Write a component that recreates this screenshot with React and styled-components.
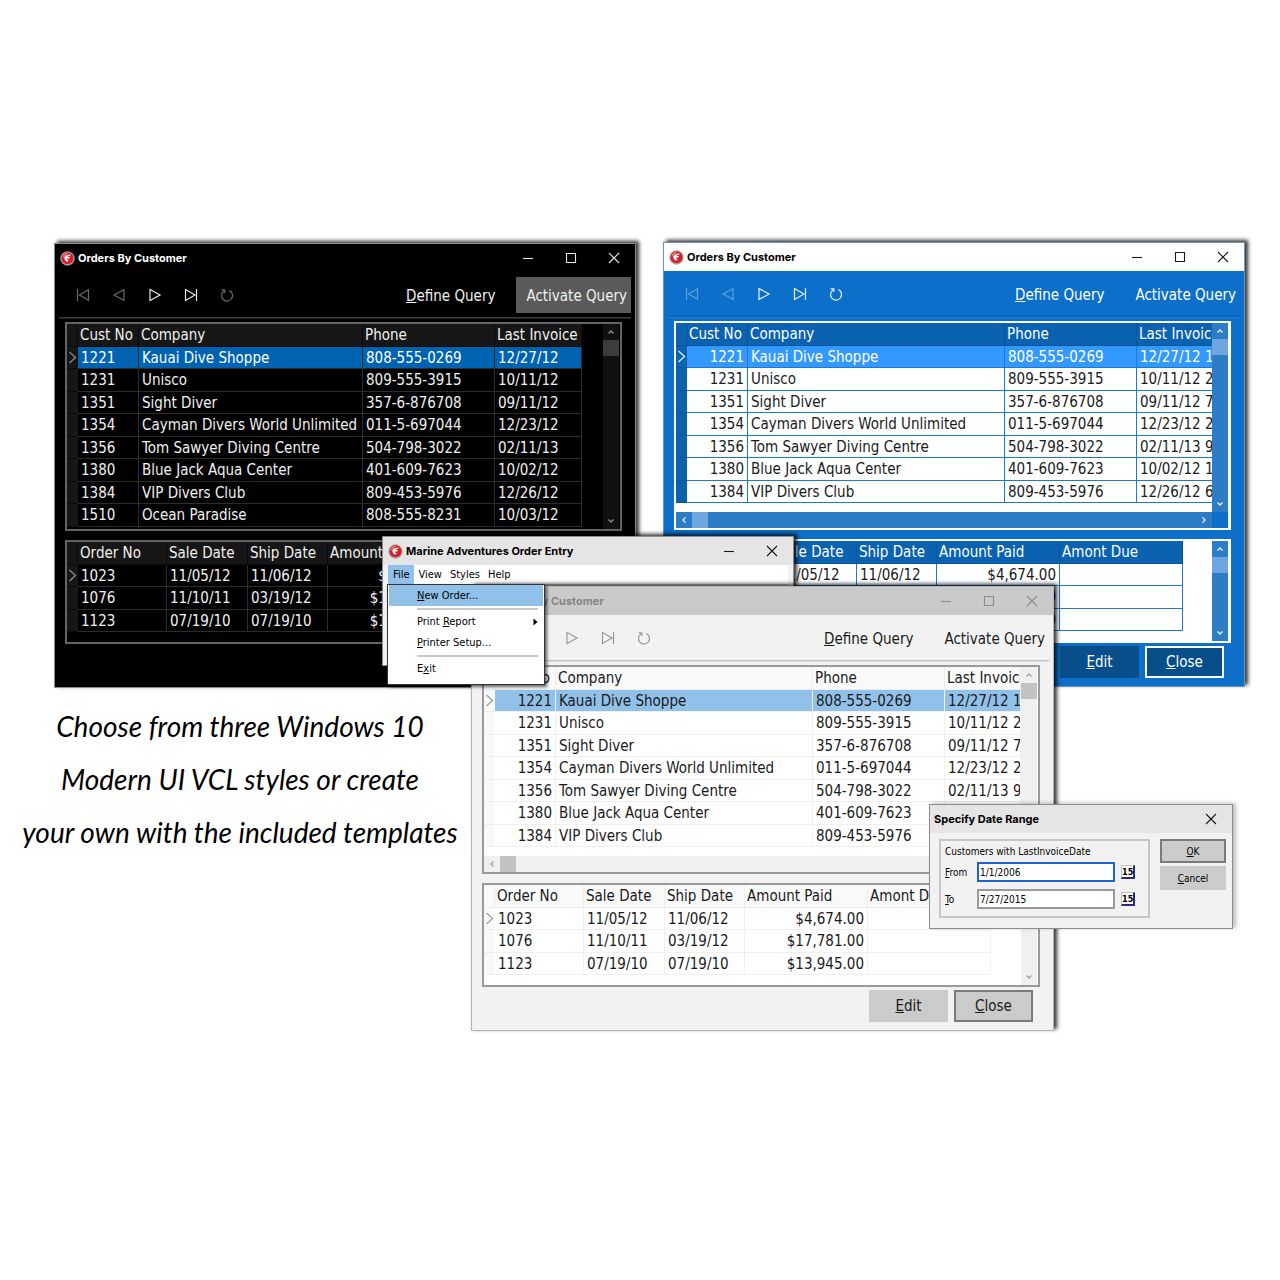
import React from 'react';
import styled, { createGlobalStyle, ThemeProvider } from 'styled-components';


const GlobalStyle = createGlobalStyle`
  * {
    box-sizing: border-box;
  }

  body {
    margin: 0;
    background-color: #fff;
    font-family: Tahoma, 'DejaVu Sans Condensed', sans-serif;
    font-size: 15px;
  }

  button, input {
    font-family: inherit;
    font-size: inherit;
    color: inherit;
    border-radius: 0;
    margin: 0;
  }
`;

// One theme for each of the three VCL styles
const darkTheme = {
  frame: '#8c8c8c',
  titleBg: '#000',
  titleText: '#fff',
  sysIcon: '#e6e6e6',
  bg: '#000',
  text: '#f0f0f0',
  icon: '#e6e6e6',
  iconOff: '#6a6a6a',
  rule: '#3c3c3c',
  ruleLight: '#222',
  gridBorder: '#646464',
  gridBg: '#000',
  gridText: '#f0f0f0',
  headBg: '#161616',
  headText: '#f0f0f0',
  headLine: '#0a0a0a',
  cellLine: '#2c2c2c',
  selBg: '#0063b1',
  selText: '#fff',
  track: '#111',
  thumb: '#3c3c3c',
  corner: '#000',
  arrow: '#8c8c8c',
  btnBg: '#333',
  btnBorder: '#777',
  toolActive: '#5a5a5a',
};

const blueTheme = {
  frame: '#6f93b8',
  titleBg: '#fff',
  titleText: '#000',
  sysIcon: '#1a1a1a',
  bg: '#0c6fc9',
  text: '#fff',
  icon: '#e4f0fb',
  iconOff: '#5b9fdc',
  rule: '#0a5cab',
  ruleLight: '#1a80dc',
  gridBorder: '#fff',
  gridBg: '#fff',
  gridText: '#1a1a1a',
  headBg: '#0a62b0',
  headText: '#fff',
  headLine: '#08559b',
  cellLine: '#1d7ad0',
  selBg: '#3399ff',
  selText: '#fff',
  track: '#2d7dc6',
  thumb: '#6ea7e0',
  corner: '#0c6fc9',
  arrow: '#e4f0fb',
  btnBg: '#084e8a',
  btnBorder: '#fff',
};

const lightTheme = {
  frame: '#b4b4b4',
  titleBg: '#cacaca',
  titleText: '#858585',
  sysIcon: '#8c8c8c',
  bg: '#f2f2f2',
  text: '#1a1a1a',
  icon: '#9a9a9a',
  iconOff: '#c4c4c4',
  rule: '#c2c2c2',
  ruleLight: '#dcdcdc',
  gridBorder: '#999',
  gridBg: '#fff',
  gridText: '#1a1a1a',
  headBg: '#f9f9f9',
  headText: '#1a1a1a',
  headLine: '#ededed',
  cellLine: '#f0f0f0',
  selBg: '#91c1e9',
  selText: '#1a1a1a',
  track: '#f0f0f0',
  thumb: '#c2c2c2',
  corner: '#f0f0f0',
  arrow: '#a0a0a0',
  btnBg: '#cbcbcb',
  btnBorder: '#7a7a7a',
};

const Desktop = styled.main`
  position: relative;
  min-height: 100vh;
  overflow: hidden;
`;

// Windows float freely on the desktop, so they carry their own position
const Window = styled.section`
  position: absolute;
  left: ${props => props.$x}px;
  top: ${props => props.$y}px;
  width: ${props => props.$width}px;
  display: flex;
  flex-direction: column;
  background-color: ${props => props.theme.bg};
  color: ${props => props.theme.text};
  border: 1px solid ${props => props.theme.frame};
  box-shadow: 3px -2px 4px rgba(0, 0, 0, 0.8);
`;

const SmallWindow = styled.section`
  position: absolute;
  left: ${props => props.$x}px;
  top: ${props => props.$y}px;
  width: ${props => props.$width}px;
  background-color: #f2f2f2;
  color: #000;
  font-size: 10px;
  border: 1px solid #8c8c8c;
  box-shadow: ${props => props.$soft ? '3px -1px 4px rgba(0, 0, 0, 0.25)' : '3px -2px 4px rgba(0, 0, 0, 0.8)'};
`;

const TitleBar = styled.header`
  display: flex;
  align-items: center;
  height: 28px;
  padding-left: ${props => props.$plain ? 4 : 5}px;
  background-color: ${props => props.$dialog ? '#e5e5e5' : props.theme.titleBg};
  color: ${props => props.$dialog ? '#000' : props.theme.titleText};
`;

const Title = styled.h2`
  flex: 1;
  margin: 0;
  font-family: Inter, sans-serif;
  font-size: 11px;
  font-weight: 700;

  svg + & {
    margin-left: 3px;
  }
`;

const SysButton = styled.button`
  display: flex;
  align-items: center;
  justify-content: center;
  width: 43px;
  height: 28px;
  padding: 0;
  border: none;
  background: none;
  color: ${props => props.$dialog ? '#1a1a1a' : props.theme.sysIcon};
`;

const Toolbar = styled.div`
  display: flex;
  align-items: center;
  margin: 0 4px;
  padding: 5px 0 4px 6px;
  border-bottom: 1px solid ${props => props.theme.rule};
  box-shadow: 0 1px 0 ${props => props.theme.ruleLight};
`;

const NavButton = styled.button`
  display: flex;
  align-items: center;
  justify-content: center;
  width: 36px;
  height: 36px;
  padding: 0;
  border: none;
  background: none;
  color: ${props => props.disabled ? props.theme.iconOff : props.theme.icon};
`;

const ToolButton = styled.button`
  height: 36px;
  padding: 2px 4px 0 10px;
  border: none;
  background-color: ${props => props.$active ? props.theme.toolActive : 'transparent'};

  &:first-of-type {
    margin-right: 17px;
  }
`;

const ToolActions = styled.div`
  display: flex;
  margin-left: auto;
`;

const Content = styled.div`
  display: flex;
  flex-direction: column;
  gap: 9px;
  padding: 4px 13px 0 10px;
`;

const GridFrame = styled.div`
  display: grid;
  grid-template-columns: minmax(0, 1fr) 16px;
  grid-template-rows: minmax(0, 1fr) auto;
  height: ${props => props.$height}px;
  padding-right: 1px;
  border: 2px solid ${props => props.theme.gridBorder};
  background-color: ${props => props.theme.gridBg};
`;

const GridView = styled.div`
  overflow: hidden;
`;

const Table = styled.table`
  width: ${props => props.$width};
  table-layout: fixed;
  border-collapse: separate;
  border-spacing: 0;
  color: ${props => props.theme.gridText};
`;

const Col = styled.col`
  width: ${props => props.$width}px;
`;

const Row = styled.tr`
  height: 23px;
  background-color: ${props => props.$selected ? props.theme.selBg : 'transparent'};
  color: ${props => props.$selected ? props.theme.selText : 'inherit'};

  tbody &:nth-child(odd) {
    height: 22px;
  }
`;

const HeadCell = styled.th`
  padding: 0 0 0 2px;
  overflow: hidden;
  white-space: nowrap;
  text-align: left;
  font-weight: 400;
  line-height: 18px;
  background-color: ${props => props.theme.headBg};
  color: ${props => props.theme.headText};
  border-right: 1px solid ${props => props.theme.headLine};
  border-bottom: 1px solid ${props => props.theme.headLine};
`;

const MarkCell = styled.td`
  padding: 0;
  line-height: 0;
  background-color: ${props => props.theme.headBg};
  color: ${props => props.theme.arrow};
  border-bottom: 1px solid ${props => props.theme.headLine};
`;

const Cell = styled.td`
  padding: 0 3px;
  overflow: hidden;
  white-space: nowrap;
  line-height: 18px;
  text-align: ${props => props.$right ? 'right' : 'left'};
  border-right: 1px solid ${props => props.theme.cellLine};
  border-bottom: 1px solid ${props => props.theme.cellLine};
`;

const ScrollBar = styled.div`
  display: flex;
  flex-direction: ${props => props.$horizontal ? 'row' : 'column'};
  background-color: ${props => props.theme.track};
`;

const ScrollArrow = styled.button`
  display: flex;
  align-items: center;
  justify-content: center;
  width: 16px;
  height: 16px;
  padding: 0;
  border: none;
  background: none;
  color: ${props => props.theme.arrow};
  transform: rotate(${props => props.$turn}deg);

  &:last-child {
    margin-${props => props.$horizontal ? 'left' : 'top'}: auto;
  }
`;

const ScrollThumb = styled.div`
  width: 16px;
  height: 16px;
  background-color: ${props => props.theme.thumb};
`;

const Corner = styled.div`
  background-color: ${props => props.theme.corner};
`;

const Footer = styled.footer`
  display: flex;
  justify-content: flex-end;
  gap: 6px;
  min-height: 43px;
  padding: 3px 20px 8px;
`;

const FooterButton = styled.button`
  width: 79px;
  height: 32px;
  padding: 0;
  background-color: ${props => props.theme.btnBg};
  border: 2px solid ${props => props.$isDefault ? props.theme.btnBorder : props.theme.btnBg};
`;

const MenuBar = styled.nav`
  display: flex;
  height: 20px;
  margin: 0 5px;
  background-color: #fff;
  border-bottom: 1px solid #c8c8c8;
`;

const MenuBarItem = styled.button`
  padding: 0 ${props => props.$open ? 5 : 4}px;
  border: none;
  font-size: 11px;
  background-color: ${props => props.$open ? '#91c1e9' : 'transparent'};
`;

const MainArea = styled.div`
  height: 80px;
  margin: 0 5px;
  background-color: #fff;
`;

const Menu = styled.ul`
  position: absolute;
  z-index: 5;
  left: 4px;
  top: 47px;
  width: 158px;
  margin: 0;
  padding: 0 1px 5px;
  list-style: none;
  background-color: #fff;
  border: 1px solid #333;
  box-shadow: 2px 2px 3px rgba(0, 0, 0, 0.6);
`;

const MenuItem = styled.button`
  display: flex;
  align-items: center;
  justify-content: space-between;
  width: 100%;
  height: 21px;
  padding: 0 5px 0 28px;
  border: none;
  font-size: 11px;
  background-color: ${props => props.$selected ? '#91c1e9' : 'transparent'};
`;

const MenuRule = styled.li`
  height: 2px;
  margin: 2px 5px 1px 28px;
  background-color: #c8c8c8;
`;

const DialogBody = styled.form`
  display: flex;
  align-items: flex-start;
  gap: 10px;
  padding: 6px 6px 10px 9px;
`;

const GroupBox = styled.fieldset`
  flex: 1;
  min-width: 0;
  margin: 0;
  padding: 3px 11px 7px 4px;
  border: 2px solid #c6c6c6;
`;

const GroupTitle = styled.div`
  height: 18px;
  line-height: 16px;
`;

const Field = styled.div`
  display: grid;
  grid-template-columns: 26px 1fr 16px;
  column-gap: 6px;
  align-items: center;

  & + & {
    margin-top: 7px;
  }
`;

const DateInput = styled.input`
  width: 100%;
  height: 20px;
  padding: 0 1px;
  background-color: #fff;
  border: 2px solid #999;
  outline: none;

  &#from {
    border-color: #1f62d6;
  }
`;

const CalendarButton = styled.button`
  width: 14px;
  height: 14px;
  padding: 0;
  line-height: 10px;
  font-size: 9px;
  font-weight: 700;
  background-color: #fff;
  border: 1px solid #c0c0c0;
  border-right: 2px solid #2a2a7c;
  border-bottom: 2px solid #2a2a7c;
`;

const DialogButtons = styled.div`
  display: flex;
  flex-direction: column;
  gap: 3px;
`;

const DialogButton = styled.button`
  width: 66px;
  height: 24px;
  padding: 0;
  background-color: #cbcbcb;
  border: 2px solid ${props => props.$isDefault ? '#7a7a7a' : '#cbcbcb'};
`;

const Tagline = styled.p`
  position: absolute;
  left: 20px;
  top: 700px;
  width: 440px;
  margin: 0;
  text-align: center;
  font-family: 'Segoe Script', Lato, cursive;
  font-size: 28px;
  font-style: italic;
  line-height: 53px;
  color: #000;
  white-space: nowrap;
`;

const Logo = () => (
  <svg width="15" height="15" viewBox="0 0 15 15" aria-hidden="true">
    <circle cx="7.5" cy="7.5" r="7.2" fill="#a9a4a4" />
    <circle cx="7.5" cy="7.2" r="6" fill="#d4202c" />
    <path d="M2.4 6.4 A5.4 5.4 0 0 1 8 1.8 L5 6 Z" fill="#f0686c" />
    <path d="M4.2 6.4 Q6.5 3.4 10.8 3.6 L9.8 5 Q8 5 7 6 L10 6 L9.2 7.4 L6.8 7.4 Q7 8.8 8.6 9.2 L7.6 10.6 Q4.6 9.8 4.2 6.4 Z" fill="#fff" />
  </svg>
);

const sysPaths = {
  Minimize: 'M1 6.5H11',
  Maximize: 'M1.5 1.5H10.5V10.5H1.5Z',
  Close: 'M1 1L11 11M11 1L1 11',
};

const navPaths = {
  First: 'M1.5 1V13M12.5 1.8V12.2L3.5 7Z',
  Prior: 'M12 1.8V12.2L2 7Z',
  Next: 'M2 1.5V12.5L12 7Z',
  Last: 'M1.5 1.5V12.5L11 7ZM12.5 1V13',
  Refresh: 'M4 3A5.5 5.5 0 1 0 9.4 2.6M1.6 1.8H4.8V5',
};

const SysIcon = ({ name }) => (
  <svg width="12" height="12" viewBox="0 0 12 12" fill="none" stroke="currentColor" strokeWidth="1.1" aria-hidden="true">
    <path d={sysPaths[name]} />
  </svg>
);

const NavIcon = ({ name }) => (
  <svg width="14" height="14" viewBox="0 0 14 14" fill="none" stroke="currentColor" strokeWidth="1.2" aria-hidden="true">
    <path d={navPaths[name]} />
  </svg>
);

const Arrow = () => (
  <svg width="6" height="4" viewBox="0 0 6 4" fill="none" stroke="currentColor" strokeWidth="1.4" aria-hidden="true">
    <path d="M0.5 3.5L3 1L5.5 3.5" />
  </svg>
);

const RowMark = () => (
  <svg width="11" height="14" viewBox="0 0 11 14" fill="none" stroke="currentColor" strokeWidth="1.3" aria-hidden="true">
    <path d="M2.5 1L8.5 6.5L2.5 12" />
  </svg>
);

const customers = [
  ['1221', 'Kauai Dive Shoppe', '808-555-0269', '12/27/12', '1'],
  ['1231', 'Unisco', '809-555-3915', '10/11/12', '2'],
  ['1351', 'Sight Diver', '357-6-876708', '09/11/12', '7'],
  ['1354', 'Cayman Divers World Unlimited', '011-5-697044', '12/23/12', '2'],
  ['1356', 'Tom Sawyer Diving Centre', '504-798-3022', '02/11/13', '9'],
  ['1380', 'Blue Jack Aqua Center', '401-609-7623', '10/02/12', '1'],
  ['1384', 'VIP Divers Club', '809-453-5976', '12/26/12', '6'],
  ['1510', 'Ocean Paradise', '808-555-8231', '10/03/12', '3'],
];

const orders = [
  ['1023', '11/05/12', '11/06/12', '$4,674.00', ''],
  ['1076', '11/10/11', '03/19/12', '$17,781.00', ''],
  ['1123', '07/19/10', '07/19/10', '$13,945.00', ''],
];

const VerticalScroll = () => (
  <ScrollBar>
    <ScrollArrow type="button" aria-label="Scroll up" $turn={0}><Arrow /></ScrollArrow>
    <ScrollThumb />
    <ScrollArrow type="button" aria-label="Scroll down" $turn={180}><Arrow /></ScrollArrow>
  </ScrollBar>
);

const DataGrid = ({ height, width, cols, heads, rows, rightCols, selectFirst, horizontal }) => (
  <GridFrame $height={height}>
    <GridView>
      <Table $width={width}>
        <colgroup>
          {cols.map((col, i) => <Col key={i} $width={col} />)}
        </colgroup>
        <thead>
          <Row>
            <HeadCell />
            {heads.map(head => <HeadCell key={head} scope="col">{head}</HeadCell>)}
          </Row>
        </thead>
        <tbody>
          {rows.map((row, i) => (
            <Row key={row[0]} $selected={selectFirst && i === 0}>
              <MarkCell>{i === 0 && <RowMark />}</MarkCell>
              {row.map((value, j) => <Cell key={j} $right={rightCols.includes(j)}>{value}</Cell>)}
            </Row>
          ))}
        </tbody>
      </Table>
    </GridView>
    <VerticalScroll />
    {horizontal && (
      <>
        <ScrollBar $horizontal>
          <ScrollArrow type="button" aria-label="Scroll left" $horizontal $turn={-90}><Arrow /></ScrollArrow>
          <ScrollThumb />
          <ScrollArrow type="button" aria-label="Scroll right" $horizontal $turn={90}><Arrow /></ScrollArrow>
        </ScrollBar>
        <Corner />
      </>
    )}
  </GridFrame>
);

const OrdersWindow = ({ x, y, width = 582, theme, compact, disabledNav }) => {
  // The compact grid shows the date only, the wide one runs on under the scroll bar
  const rows = compact
    ? customers.map(row => row.slice(0, 4))
    : customers.slice(0, 7).map(([no, company, phone, date, time]) => [no, company, phone, `${date} ${time}`]);

  return (
    <ThemeProvider theme={theme}>
      <Window $x={x} $y={y} $width={width}>
        <TitleBar>
          <Logo />
          <Title>Orders By Customer</Title>
          {Object.keys(sysPaths).map(name => (
            <SysButton key={name} type="button" aria-label={name}><SysIcon name={name} /></SysButton>
          ))}
        </TitleBar>
        <Toolbar>
          {Object.keys(navPaths).map(name => (
            <NavButton key={name} type="button" aria-label={name} disabled={disabledNav.includes(name)}>
              <NavIcon name={name} />
            </NavButton>
          ))}
          <ToolActions>
            <ToolButton type="button"><u>D</u>efine Query</ToolButton>
            <ToolButton type="button" $active={compact}>Activate Query</ToolButton>
          </ToolActions>
        </Toolbar>
        <Content>
          <DataGrid
            height={209}
            width={compact ? '515px' : '537px'}
            cols={compact ? [11, 61, 224, 132, 87] : [11, 61, 257, 132, 76]}
            heads={['Cust No', 'Company', 'Phone', 'Last Invoice']}
            rows={rows}
            rightCols={compact ? [] : [0]}
            horizontal={!compact}
            selectFirst
          />
          <DataGrid
            height={104}
            width="507px"
            cols={[11, 89, 81, 80, 123, 123]}
            heads={['Order No', 'Sale Date', 'Ship Date', 'Amount Paid', 'Amont Due']}
            rows={orders}
            rightCols={[3]}
          />
        </Content>
        <Footer>
          {!compact && (
            <>
              <FooterButton type="button"><u>E</u>dit</FooterButton>
              <FooterButton type="button" $isDefault><u>C</u>lose</FooterButton>
            </>
          )}
        </Footer>
      </Window>
    </ThemeProvider>
  );
};

const OrderEntryWindow = () => (
  <SmallWindow $x={382} $y={536} $width={412}>
    <TitleBar $dialog>
      <Logo />
      <Title>Marine Adventures Order Entry</Title>
      <SysButton type="button" aria-label="Minimize" $dialog><SysIcon name="Minimize" /></SysButton>
      <SysButton type="button" aria-label="Close" $dialog><SysIcon name="Close" /></SysButton>
    </TitleBar>
    <MenuBar>
      <MenuBarItem type="button" $open>File</MenuBarItem>
      <MenuBarItem type="button">View</MenuBarItem>
      <MenuBarItem type="button">Styles</MenuBarItem>
      <MenuBarItem type="button">Help</MenuBarItem>
    </MenuBar>
    <MainArea />
    <Menu>
      <li><MenuItem type="button" $selected><span><u>N</u>ew Order...</span></MenuItem></li>
      <MenuRule />
      <li>
        <MenuItem type="button">
          <span>Print <u>R</u>eport</span>
          <svg width="5" height="8" viewBox="0 0 5 8" aria-hidden="true"><path d="M0.5 0.5L4.5 4L0.5 7.5Z" /></svg>
        </MenuItem>
      </li>
      <li><MenuItem type="button"><span><u>P</u>rinter Setup...</span></MenuItem></li>
      <MenuRule />
      <li><MenuItem type="button"><span>E<u>x</u>it</span></MenuItem></li>
    </Menu>
  </SmallWindow>
);

const DateRangeDialog = () => (
  <SmallWindow as="div" role="dialog" $x={929} $y={804} $width={304} $soft>
    <TitleBar $dialog $plain>
      <Title>Specify Date Range</Title>
      <SysButton type="button" aria-label="Close" $dialog><SysIcon name="Close" /></SysButton>
    </TitleBar>
    <DialogBody onSubmit={(e) => e.preventDefault()}>
      <GroupBox>
        <GroupTitle>Customers with LastInvoiceDate</GroupTitle>
        <Field>
          <label htmlFor="from"><u>F</u>rom</label>
          <DateInput id="from" type="text" defaultValue="1/1/2006" />
          <CalendarButton type="button">15</CalendarButton>
        </Field>
        <Field>
          <label htmlFor="to"><u>T</u>o</label>
          <DateInput id="to" type="text" defaultValue="7/27/2015" />
          <CalendarButton type="button">15</CalendarButton>
        </Field>
      </GroupBox>
      <DialogButtons>
        <DialogButton type="submit" $isDefault><u>O</u>K</DialogButton>
        <DialogButton type="button"><u>C</u>ancel</DialogButton>
      </DialogButtons>
    </DialogBody>
  </SmallWindow>
);

const App = () => (
  <Desktop>
    <GlobalStyle />
    <OrdersWindow x={54} y={243} theme={darkTheme} disabledNav={['First', 'Prior', 'Refresh']} compact />
    <OrdersWindow x={663} y={242} theme={blueTheme} disabledNav={['First', 'Prior']} />
    <OrderEntryWindow />
    <OrdersWindow x={471} y={586} width={583} theme={lightTheme} disabledNav={['First', 'Prior']} />
    <DateRangeDialog />
    <Tagline>
      Choose from three Windows 10<br />
      Modern UI VCL styles or create<br />
      your own with the included templates
    </Tagline>
  </Desktop>
);

export default App;
